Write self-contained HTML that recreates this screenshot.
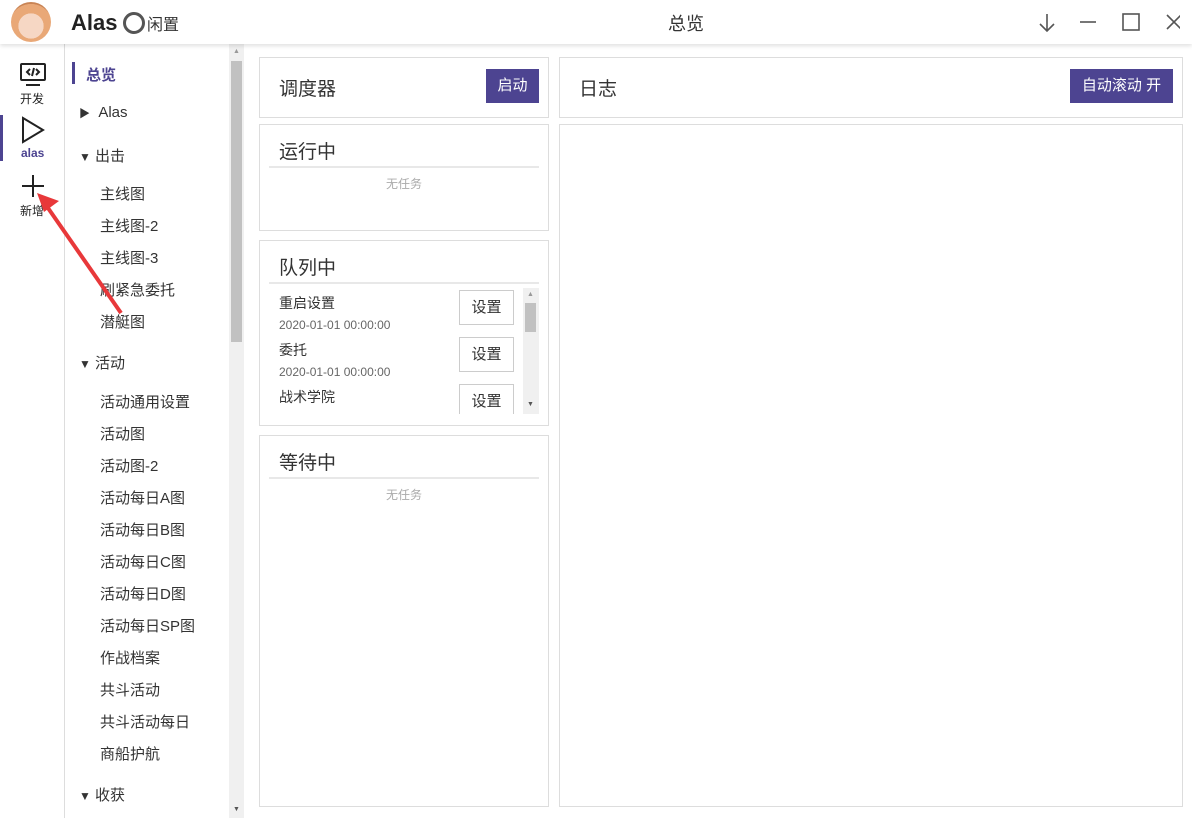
<!DOCTYPE html>
<html><head><meta charset="utf-8"><style>
*{margin:0;padding:0;box-sizing:border-box}
body{width:1192px;height:818px;overflow:hidden;background:#fff;font-family:"Liberation Sans","Noto Sans CJK SC",sans-serif;color:#222;position:relative}
.abs{position:absolute}
.hdr{left:0;top:0;width:1192px;height:44px;background:#fff;box-shadow:0 2px 4px rgba(0,0,0,.12);z-index:2}
.rail{left:0;top:44px;width:65px;height:774px;border-right:1px solid #ddd}
.nav{left:65px;top:42px;width:164px;height:774px}
.nav div{position:absolute;font-size:15px;color:#333;white-space:nowrap}
.card{position:absolute;border:1px solid #ddd;background:#fff}
.ttl{position:absolute;left:19px;font-size:19px;color:#333}
.btn{position:absolute;background:#4d4491;color:#fff;font-size:15px;text-align:center}
.sep{position:absolute;left:9px;right:9px;height:2px;background:#e8e8e8}
.none{position:absolute;left:0;right:0;text-align:center;font-size:12px;color:#aaa}
.qi{position:absolute;left:19px;font-size:14px;color:#333}
.qd{position:absolute;left:19px;font-size:12px;color:#666}
.sb{position:absolute;left:199px;width:55px;height:35px;border:1px solid #ccc;font-size:15px;text-align:center;line-height:33px;color:#333;background:#fff}
</style></head><body>
<div class="abs hdr">
 <div class="abs" style="left:11px;top:2px;width:40px;height:40px;border-radius:50%;background:radial-gradient(circle at 50% 60%,#f6d7c4 0 40%,#e9a877 41% 70%,#c98455 71%)"></div>
 <div class="abs" style="left:71px;top:10px;font-size:22px;font-weight:bold;color:#222">Alas</div>
 <div class="abs" style="left:123px;top:12px;width:22px;height:22px;border:3px solid #555;border-radius:50%"></div>
 <div class="abs" style="left:147px;top:11px;font-size:16px;color:#333">闲置</div>
 <div class="abs" style="left:668px;top:10px;font-size:18px;color:#333">总览</div>
 <svg class="abs" style="left:1030px;top:10px" width="150" height="26" fill="none" stroke="#555" stroke-width="1.6">
  <path d="M17 4v17M10 14l7 7 7-7"/><path d="M50 12h16"/><rect x="93" y="4" width="16" height="16"/><path d="M137 5l14 14M151 5l-14 14"/></svg>
</div>
<div class="abs rail">
 <svg class="abs" style="left:20px;top:19px" width="26" height="24" fill="none" stroke="#222" stroke-width="2"><rect x="1" y="1" width="24" height="16" rx="1"/><path d="M6 22h14M10 6l-3 3 3 3M16 6l3 3-3 3M14 5l-2 8"/></svg>
 <div class="abs" style="left:20px;top:46px;font-size:12px">开发</div>
 <div class="abs" style="left:0;top:71px;width:3px;height:46px;background:#4d4491"></div>
 <svg class="abs" style="left:21px;top:72px" width="24" height="28" fill="none" stroke="#222" stroke-width="2"><path d="M2 2l20 12-20 12z"/></svg>
 <div class="abs" style="left:21px;top:102px;font-size:12px;font-weight:bold;color:#4d4491">alas</div>
 <svg class="abs" style="left:21px;top:130px" width="24" height="24" stroke="#222" stroke-width="2"><path d="M12 1v22M1 12h22"/></svg>
 <div class="abs" style="left:20px;top:158px;font-size:12px">新增</div>
</div>
<div class="abs nav">
 <div style="left:7px;top:20px;width:3px;height:22px;background:#4d4491"></div>
 <div style="left:21px;top:22px;font-weight:bold;color:#4d4491">总览</div>
 <div style="left:14px;top:62px"><span style="font-size:11px">▶</span>&nbsp;&nbsp;Alas</div>
 <div style="left:14px;top:103px"><span style="font-size:12px">▼</span>&nbsp;出击</div>
 <div style="left:35px;top:141px">主线图</div>
 <div style="left:35px;top:173px">主线图-2</div>
 <div style="left:35px;top:205px">主线图-3</div>
 <div style="left:35px;top:237px">刷紧急委托</div>
 <div style="left:35px;top:269px">潜艇图</div>
 <div style="left:14px;top:310px"><span style="font-size:12px">▼</span>&nbsp;活动</div>
 <div style="left:35px;top:349px">活动通用设置</div>
 <div style="left:35px;top:381px">活动图</div>
 <div style="left:35px;top:413px">活动图-2</div>
 <div style="left:35px;top:445px">活动每日A图</div>
 <div style="left:35px;top:477px">活动每日B图</div>
 <div style="left:35px;top:509px">活动每日C图</div>
 <div style="left:35px;top:541px">活动每日D图</div>
 <div style="left:35px;top:573px">活动每日SP图</div>
 <div style="left:35px;top:605px">作战档案</div>
 <div style="left:35px;top:637px">共斗活动</div>
 <div style="left:35px;top:669px">共斗活动每日</div>
 <div style="left:35px;top:701px">商船护航</div>
 <div style="left:14px;top:742px"><span style="font-size:12px">▼</span>&nbsp;收获</div>
</div>
<div class="abs" style="left:229px;top:44px;width:15px;height:774px;background:#f0f0f0">
 <div class="abs" style="left:2px;top:17px;width:11px;height:281px;background:#c1c1c1"></div>
 <div class="abs" style="left:4px;top:4px;font-size:7px;color:#999">▲</div>
 <div class="abs" style="left:4px;top:762px;font-size:7px;color:#555">▼</div>
</div>
<div class="card" style="left:259px;top:57px;width:290px;height:61px"><div class="ttl" style="top:16px">调度器</div><div class="btn" style="left:226px;top:11px;width:53px;height:34px;line-height:34px">启动</div></div>
<div class="card" style="left:559px;top:57px;width:624px;height:61px"><div class="ttl" style="top:16px">日志</div><div class="btn" style="left:510px;top:11px;width:103px;height:34px;line-height:34px">自动滚动 开</div></div>
<div class="card" style="left:259px;top:124px;width:290px;height:107px"><div class="ttl" style="top:12px">运行中</div><div class="sep" style="top:41px"></div><div class="none" style="top:50px">无任务</div></div>
<div class="card" style="left:259px;top:240px;width:290px;height:186px"><div class="ttl" style="top:12px">队列中</div><div class="sep" style="top:41px"></div>
 <div class="qi" style="top:52px">重启设置</div><div class="qd" style="top:77px">2020-01-01 00:00:00</div><div class="sb" style="top:49px">设置</div>
 <div class="qi" style="top:99px">委托</div><div class="qd" style="top:124px">2020-01-01 00:00:00</div><div class="sb" style="top:96px">设置</div>
 <div class="qi" style="top:146px">战术学院</div><div class="sb" style="top:143px;height:30px;border-bottom:none">设置</div>
 <div class="abs" style="left:263px;top:47px;width:16px;height:126px;background:#f0f0f0"><div class="abs" style="left:2px;top:15px;width:11px;height:29px;background:#c1c1c1"></div><div class="abs" style="left:4px;top:3px;font-size:7px;color:#999">▲</div><div class="abs" style="left:4px;top:113px;font-size:7px;color:#555">▼</div></div>
</div>
<div class="card" style="left:259px;top:435px;width:290px;height:372px"><div class="ttl" style="top:12px">等待中</div><div class="sep" style="top:41px"></div><div class="none" style="top:50px">无任务</div></div>
<div class="card" style="left:559px;top:124px;width:624px;height:683px"></div>
<svg class="abs" style="left:0;top:0;z-index:5" width="200" height="330"><path d="M121 313L48 208" stroke="#e8383a" stroke-width="4"/><path d="M37 193l22 8-15 11z" fill="#e8383a"/></svg>
</body></html>
